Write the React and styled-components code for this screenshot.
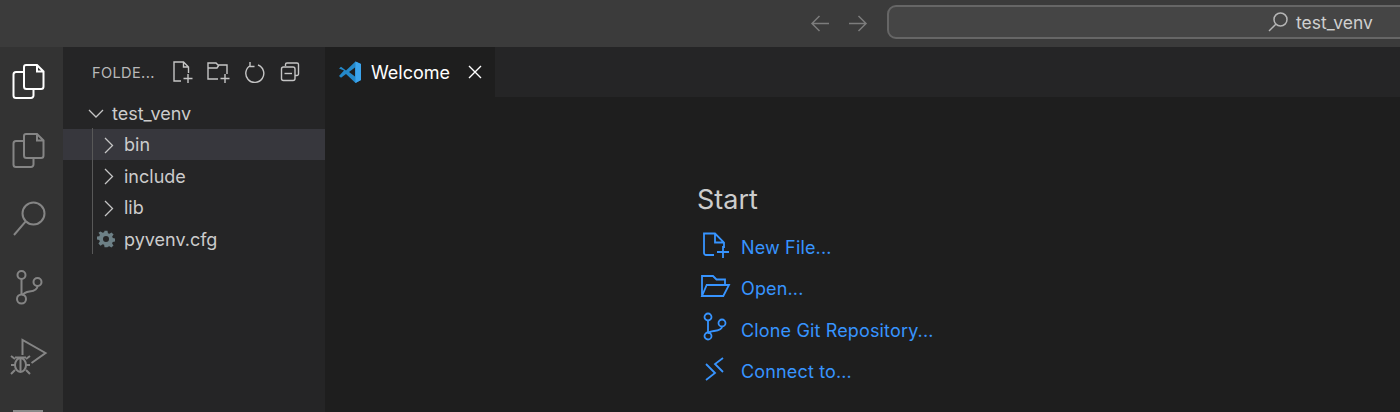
import React from "react";
import styled, { createGlobalStyle } from "styled-components";

const Global = createGlobalStyle`
  html, body { margin: 0; padding: 0; background: #1e1e1e; }
  body { font-family: Inter, "Liberation Sans", sans-serif; overflow: hidden; }
`;
const Window = styled.div`width:1400px;height:412px;display:flex;flex-direction:column;overflow:hidden;`;
const TitleBar = styled.header`
  height:47px;flex:none;background:#3b3b3b;display:flex;align-items:center;padding-left:808px;box-sizing:border-box;
`;
const NavGroup = styled.div`display:flex;gap:12px;margin-right:17px;`;
const NavIcon = styled.svg`width:25px;height:25px;fill:none;stroke:#7c7c7c;stroke-width:1.5;`;
const CommandBox = styled.div`
  width:560px;height:34px;flex:none;box-sizing:border-box;margin-bottom:3px;background:#454545;border:2px solid #666;border-radius:9px;
  display:flex;align-items:center;
`;
const CommandInner = styled.div`display:flex;align-items:center;gap:7px;margin-left:378px;color:#cfcfcf;font-size:17.5px;`;
const Body = styled.div`flex:1;display:flex;min-height:0;`;
const Activity = styled.nav`
  width:63px;flex:none;background:#333;display:flex;flex-direction:column;align-items:center;box-sizing:border-box;position:relative;padding-right:10px;
`;
const ActIcon = styled.svg`
  display:block;flex:none;overflow:visible;fill:none;stroke:${p=>p.$active?"#fff":"#858585"};stroke-width:2;width:44px;height:44px;margin-top:${p=>p.$mt}px;
`;
const BottomBar = styled.div`position:absolute;left:13px;bottom:0;width:30px;height:2px;background:#8a8a8a;`;
const Sidebar = styled.aside`width:262px;flex:none;background:#252526;display:flex;flex-direction:column;`;
const SideHead = styled.div`height:50px;flex:none;display:flex;align-items:center;box-sizing:border-box;padding:2px 0 0 29px;`;
const SideTitle = styled.span`font-size:14.6px;color:#b9b9b9;width:78px;letter-spacing:.35px;`;
const HeadIcons = styled.div`display:flex;align-items:center;gap:12px;margin-top:-2px;`;
const HeadIcon = styled.svg`width:24px;height:24px;fill:none;stroke:#c5c5c5;stroke-width:1.4;display:block;`;
const Tree = styled.div`position:relative;display:flex;flex-direction:column;`;
const Row = styled.div`
  height:31.5px;display:flex;align-items:center;box-sizing:border-box;padding:1px 0 0 ${p=>p.$root?24:37}px;
  background:${p=>p.$sel?"#37373d":"transparent"};color:#ccc;font-size:18px;
`;
const Guide = styled.div`position:absolute;left:29px;top:31px;width:1px;height:126px;background:#585858;`;
const Chevron = styled.svg`width:18px;height:18px;flex:none;fill:none;stroke:#c5c5c5;stroke-width:1.3;margin-right:${p=>p.$root?7:6}px;`;
const Gear = styled.svg`width:18px;height:18px;flex:none;margin:0 9px 0 -3px;fill:#6d8086;`;
const Main = styled.main`flex:1;display:flex;flex-direction:column;background:#1e1e1e;min-width:0;`;
const TabBar = styled.div`height:50px;flex:none;background:#252526;display:flex;`;
const Tab = styled.div`width:170px;background:#1e1e1e;display:flex;align-items:center;box-sizing:border-box;padding:0 0 0 13px;color:#fff;font-size:18px;`;
const Logo = styled.svg`width:24px;height:24px;flex:none;margin-right:9px;`;
const Close = styled.svg`width:18px;height:18px;margin-left:16px;flex:none;fill:none;stroke:#fff;stroke-width:1.4;`;
const Editor = styled.div`flex:1;padding:86px 0 0 373px;display:flex;flex-direction:column;`;
const Heading = styled.h2`margin:0 0 11px -1px;font-size:27px;line-height:33px;font-weight:400;color:#ccc;`;
const Link = styled.a`
  height:${p=>p.$h}px;display:flex;align-items:center;color:#3794ff;font-size:18px;letter-spacing:.15px;
`;
const LinkIcon = styled.svg`width:32px;height:32px;flex:none;margin-right:11px;overflow:visible;fill:none;stroke:#3794ff;stroke-width:1.8;`;

const Files = ({ active, mt }) => (
  <ActIcon $active={active} $mt={mt} viewBox="0 0 44 44">
    <path d="M21 6h11l6.500 6.500v15a2.500 2.500 0 0 1-2.500 2.500H21.500a2.500 2.500 0 0 1-2.500-2.500V8a2 2 0 0 1 2-2zM32 6v6.500h6.500"/>
    <path d="M19 13H11a2.500 2.500 0 0 0-2.500 2.500V36.500A2.500 2.500 0 0 0 11 39H26a2.500 2.500 0 0 0 2.500-2.500V30"/>
  </ActIcon>
);

export default function App() {
  return (
    <Window>
      <Global />
      <TitleBar>
        <NavGroup>
          <NavIcon viewBox="0 0 25 25"><path d="M21 12.500H4M11.500 5l-7.500 7.500 7.500 7.500"/></NavIcon>
          <NavIcon viewBox="0 0 25 25"><path d="M4 12.500h17M13.500 5l7.500 7.500-7.500 7.500"/></NavIcon>
        </NavGroup>
        <CommandBox>
          <CommandInner>
            <svg width="22" height="22" viewBox="0 0 22 22" fill="none" stroke="#b5b5b5" strokeWidth="1.5"><circle cx="13.500" cy="8.500" r="6.500"/><path d="M8.800 13.200L2 20"/></svg>
            test_venv
          </CommandInner>
        </CommandBox>
      </TitleBar>
      <Body>
        <Activity>
          <Files active mt={12} />
          <Files mt={25} />
          <ActIcon $mt={22} viewBox="0 0 44 44"><circle cx="28.500" cy="19.500" r="11"/><path d="M20.700 27.300L9 41"/></ActIcon>
          <ActIcon $mt={24} viewBox="0 0 44 44"><circle cx="16.500" cy="13" r="4"/><circle cx="16.500" cy="37" r="4.500"/><circle cx="32.500" cy="20" r="4"/><path d="M16.500 17V32.500M32.500 24c0 4-4 5-8 5.500s-6 2-7 4"/></ActIcon>
          <ActIcon $mt={24} viewBox="0 0 44 44"><path d="M17.500 25V10l23 13-14 10"/><ellipse cx="15.500" cy="35" rx="5.500" ry="7"/><path d="M10 27.500h11M6 26l4 3M25 26l-4 3M6 35h4M25 35h-4M6 44l4-4M25 44l-4-4M15.500 28v14"/></ActIcon>
          <BottomBar />
        </Activity>
        <Sidebar>
          <SideHead>
            <SideTitle>FOLDE...</SideTitle>
            <HeadIcons>
              <HeadIcon viewBox="0 0 24 24"><path d="M11 21H4V2h9.500l5 5v6M13.500 2v5h5M18 14v9M13.500 18.500h9"/></HeadIcon>
              <HeadIcon viewBox="0 0 24 24"><path d="M12 19H2V3h8l2 2h9v9M2 8h9l2-3M19 14v9M14.500 18.500h9"/></HeadIcon>
              <HeadIcon viewBox="0 0 24 24"><path d="M8.500 5.500A9 9 0 1 0 16 5M8 2v4.500h4.500"/></HeadIcon>
              <HeadIcon viewBox="0 0 24 24"><path d="M7.500 6V4.500A1.500 1.500 0 0 1 9 3h10a1.500 1.500 0 0 1 1.500 1.500V14a1.500 1.500 0 0 1-1.500 1.500h-2"/><rect x="3.500" y="7" width="13.500" height="13.500" rx="2"/><path d="M6.500 13.500h7.500"/></HeadIcon>
            </HeadIcons>
          </SideHead>
          <Tree>
            <Guide />
            <Row $root><Chevron $root viewBox="0 0 18 18"><path d="M2 6l7 7 7-7"/></Chevron>test_venv</Row>
            <Row $sel><Chevron viewBox="0 0 18 18"><path d="M5 2l7.500 7.500L5 17"/></Chevron>bin</Row>
            <Row><Chevron viewBox="0 0 18 18"><path d="M5 2l7.500 7.500L5 17"/></Chevron>include</Row>
            <Row><Chevron viewBox="0 0 18 18"><path d="M5 2l7.500 7.500L5 17"/></Chevron>lib</Row>
            <Row>
              <Gear viewBox="0 0 24 24"><path fillRule="evenodd" d="M10 1h4l.6 3.200 2 .9L19.300 3.200l2.800 2.800-1.900 2.700.9 2 3 .6v4l-3.200.6-.8 2 1.900 2.700-2.800 2.800-2.700-1.900-2 .8L14 23h-4l-.5-3.200-2-.8-2.800 1.900L1.900 18l1.900-2.700-.8-2L0 12.700v-4l3.100-.5.8-2L2 3.500 4.700 1.900 7.500 3.800l2-.8zM12 8a4 4 0 1 0 0 8 4 4 0 0 0 0-8z"/></Gear>
              pyvenv.cfg
            </Row>
          </Tree>
        </Sidebar>
        <Main>
          <TabBar>
            <Tab>
              <Logo viewBox="0 0 24 24">
                <path fill="#2489ca" d="M1 8.600l2-1.800 5 3.800 9.500-9L23 4v16l-5.500 3-9.500-9-5 3.800-2-1.800 5-5.500z"/>
                <path fill="#1e1e1e" d="M17 7.500l-6 4.500 6 4.500z"/>
                <path fill="#3ca4ec" d="M17.500 1.600L23 4v16l-5.500 3z"/>
              </Logo>
              Welcome
              <Close viewBox="0 0 18 18"><path d="M3 3l12 12M15 3L3 15"/></Close>
            </Tab>
          </TabBar>
          <Editor>
            <Heading>Start</Heading>
            <Link $h={41}>
              <LinkIcon viewBox="0 0 32 32"><path d="M16 23H8a2 2 0 0 1-2-2V1.500h11l9 9V16M17 1.500v9h9M25 14v12M19 20h12"/></LinkIcon>New File...
            </Link>
            <Link $h={41}>
              <LinkIcon viewBox="0 0 32 32"><path d="M4 23V3h11l3.500 3.500H27V12M4 23l4.700-11H31l-5.700 11z"/></LinkIcon>Open...
            </Link>
            <Link $h={42}>
              <LinkIcon viewBox="0 0 32 32"><circle cx="10" cy="3" r="3.500"/><circle cx="10" cy="22" r="3.500"/><circle cx="24" cy="9" r="3.500"/><path d="M10 6.500v12M24 12.500c0 3-4 4-8 4.500s-5 1-6 2.500"/></LinkIcon>Clone Git Repository...
            </Link>
            <Link $h={41}>
              <LinkIcon viewBox="0 0 32 32"><path d="M8 8l9 9-9 7M25 2l-8 6 8 8"/></LinkIcon>Connect to...
            </Link>
          </Editor>
        </Main>
      </Body>
    </Window>
  );
}
